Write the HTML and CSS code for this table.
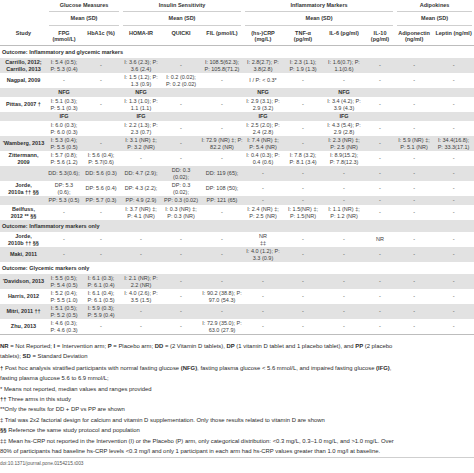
FILE: index.html
```html
<!DOCTYPE html>
<html>
<head>
<meta charset="utf-8">
<link rel="stylesheet" href="styles.css">
</head>
<body>
<div class="page">
<table class="tbl">
<colgroup>
<col class="w-study"><col class="w-fpg"><col class="w-hba"><col class="w-homa"><col class="w-quicki"><col class="w-fil"><col class="w-crp"><col class="w-tnf"><col class="w-il6"><col class="w-il10"><col class="w-adipo"><col class="w-leptin">
</colgroup>
<thead>
<tr class="r1"><th></th><th colspan="2"><div class="grp">Glucose Measures</div></th><th colspan="3"><div class="grp">Insulin Sensitivity</div></th><th colspan="4"><div class="grp">Inflammatory Markers</div></th><th colspan="2"><div class="grp">Adipokines</div></th></tr>
<tr class="r2"><th></th><th colspan="2"><div class="grp grp2">Mean (SD)</div></th><th colspan="3"><div class="grp grp2">Mean (SD)</div></th><th colspan="4"><div class="grp grp2">Mean (SD)</div></th><th colspan="2"><div class="grp grp2">Mean (SD)</div></th></tr>
<tr class="r3">
<th><div class="ch">Study</div></th>
<th><div class="ch">FPG<br>(mmol/L)</div></th>
<th><div class="ch">HbA1c (%)</div></th>
<th><div class="ch">HOMA-IR</div></th>
<th><div class="ch">QUICKI</div></th>
<th><div class="ch">FIL (pmol/L)</div></th>
<th><div class="ch">(hs-)CRP<br>(mg/L)</div></th>
<th><div class="ch">TNF-α<br>(pg/ml)</div></th>
<th><div class="ch">IL-6 (pg/ml)</div></th>
<th><div class="ch">IL-10<br>(pg/ml)</div></th>
<th><div class="ch">Adiponectin<br>(ng/ml)</div></th>
<th><div class="ch">Leptin (ng/ml)</div></th>
</tr>
</thead>
<tbody>
<tr class="sec"><td colspan="12">Outcome: Inflammatory and glycemic markers</td></tr>
<tr class="g"><td class="st">Carrillo, 2012;<br>Carrillo, 2013</td><td>I: 5.4 (0.5);<br>P: 5.3 (0.4)</td><td>-</td><td>I: 3.6 (2.3); P:<br>3.6 (2.4)</td><td>-</td><td>I: 108.5(62.3);<br>P: 105.8(71.2)</td><td>I: 2.8(2.7); P:<br>3.8(2.8)</td><td>I: 2.3 (1.1);<br>P: 1.9 (1.3)</td><td>I: 1.6(0.7); P:<br>1.1(0.6)</td><td>-</td><td>-</td><td>-</td></tr>
<tr><td class="st">Nagpal, 2009</td><td>-</td><td>-</td><td>I: 1.5 (1.2); P:<br>1.3 (0.9)</td><td>I: 0.2 (0.02);<br>P: 0.2 (0.02)</td><td>-</td><td>I / P: &lt; 0.3*</td><td>-</td><td>-</td><td>-</td><td>-</td><td>-</td></tr>
<tr class="g s"><td></td><td class="lb">NFG</td><td></td><td class="lb">NFG</td><td></td><td></td><td class="lb">NFG</td><td></td><td class="lb">NFG</td><td></td><td></td><td></td></tr>
<tr><td class="st">Pittas, 2007 †</td><td>I: 5.1 (0.3);<br>P: 5.1 (0.3)</td><td>-</td><td>I: 1.3 (1.0); P:<br>1.1 (1.1)</td><td>-</td><td>-</td><td>I: 2.9 (3.1); P:<br>2.9 (3.2)</td><td>-</td><td>I: 3.4 (4.2); P:<br>3.9 (4.3)</td><td>-</td><td>-</td><td>-</td></tr>
<tr class="g s"><td></td><td class="lb">IFG</td><td></td><td class="lb">IFG</td><td></td><td></td><td class="lb">IFG</td><td></td><td class="lb">IFG</td><td></td><td></td><td></td></tr>
<tr><td class="st"></td><td>I: 6.0 (0.3);<br>P: 6.0 (0.3)</td><td></td><td>I: 2.2 (1.3); P:<br>2.3 (0.7)</td><td>-</td><td>-</td><td>I: 2.5 (2.0); P:<br>2.4 (2.8)</td><td>-</td><td>I: 4.3 (5.4); P:<br>2.9 (2.8)</td><td>-</td><td>-</td><td>-</td></tr>
<tr class="g"><td class="st">ʹWamberg, 2013</td><td>I: 5.3 (0.4);<br>P: 5.5 (0.5)</td><td>-</td><td>I: 3.1 (NR) ‡;<br>P: 3.2 (NR)</td><td>-</td><td>I: 72.9 (NR) ‡; P:<br>82.2 (NR)</td><td>I: 7.4 (NR) ‡;<br>P: 5.4 (NR)</td><td>-</td><td>I: 2.3 (NR) ‡;<br>P: 2.5 (NR)</td><td>-</td><td>I: 5.9 (NR) ‡;<br>P: 5.1 (NR)</td><td>I: 34.4(16.8);<br>P: 33.3(17.1)</td></tr>
<tr><td class="st">Zittermann,<br>2009</td><td>I: 5.7 (0.8);<br>P: 5.6 (1.2)</td><td>I: 5.6 (0.4);<br>P: 5.7(0.6)</td><td>-</td><td>-</td><td>-</td><td>I: 0.4 (0.3); P:<br>0.4 (0.6)</td><td>I: 7.8 (3.2);<br>P: 8.1 (3.4)</td><td>I: 8.9(15.2);<br>P: 7.8(12.3)</td><td>-</td><td>-</td><td>-</td></tr>
<tr class="g"><td class="st"></td><td>DD: 5.3(0.6);</td><td>DD: 5.6 (0.3)</td><td>DD: 4.7 (2.9);</td><td>DD: 0.3<br>(0.02);</td><td>DD: 119 (65);</td><td>-</td><td>-</td><td>-</td><td>-</td><td>-</td><td>-</td></tr>
<tr><td class="st">Jorde,<br>2010a †† §§</td><td>DP: 5.3<br>(0.6);</td><td>DP: 5.6 (0.4)</td><td>DP: 4.3 (2.2);</td><td>DP: 0.3<br>(0.02);</td><td>DP: 108 (50);</td><td>-</td><td>-</td><td>-</td><td>-</td><td>-</td><td>-</td></tr>
<tr class="g s"><td class="st"></td><td>PP: 5.3 (0.5)</td><td>PP: 5.7 (0.3)</td><td>PP: 4.9 (2.9)</td><td>PP: 0.3 (0.02)</td><td>PP: 121 (65)</td><td>-</td><td>-</td><td>-</td><td>-</td><td>-</td><td>-</td></tr>
<tr><td class="st">Beilfuss,<br>2012 ** §§</td><td>-</td><td>-</td><td>I: 3.7 (NR) ‡;<br>P: 4.1 (NR)</td><td>I: 0.3 (NR) ‡;<br>P: 0.3 (NR)</td><td>-</td><td>I: 2.4 (NR) ‡;<br>P: 2.5 (NR)</td><td>I: 1.5(NR) ‡;<br>P: 1.5(NR)</td><td>I: 1.1 (NR) ‡;<br>P: 1.2 (NR)</td><td>-</td><td>-</td><td>-</td></tr>
<tr class="sec g"><td colspan="12">Outcome: Inflammatory markers only</td></tr>
<tr><td class="st">Jorde,<br>2010b †† §§</td><td>-</td><td>-</td><td>-</td><td>-</td><td>-</td><td>NR<br>‡‡</td><td>-</td><td>-</td><td>NR</td><td>-</td><td>-</td></tr>
<tr class="g"><td class="st">Maki, 2011</td><td>-</td><td>-</td><td>-</td><td>-</td><td>-</td><td>I: 4.0 (1.2); P:<br>3.3 (0.9)</td><td>-</td><td>-</td><td>-</td><td>-</td><td>-</td></tr>
<tr class="sec"><td colspan="12">Outcome: Glycemic markers only</td></tr>
<tr class="g"><td class="st">ʹDavidson, 2013</td><td>I: 5.5 (0.5);<br>P: 5.4 (0.5)</td><td>I: 6.1 (0.3);<br>P: 6.1 (0.4)</td><td>I: 2.1 (NR); P:<br>2.2 (NR)</td><td>-</td><td>-</td><td>-</td><td>-</td><td>-</td><td>-</td><td>-</td><td>-</td></tr>
<tr><td class="st">Harris, 2012</td><td>I: 5.2 (0.4);<br>P: 5.5 (1.0)</td><td>I: 6.1 (0.4);<br>P: 6.1 (0.5)</td><td>I: 4.0 (2.6); P:<br>3.5 (1.5)</td><td>-</td><td>I: 90.2 (38.8); P:<br>97.0 (54.3)</td><td>-</td><td>-</td><td>-</td><td>-</td><td>-</td><td>-</td></tr>
<tr class="g"><td class="st">Mitri, 2011 ††</td><td>I: 5.1 (0.5);<br>P: 5.2 (0.5)</td><td>I: 5.9 (0.3);<br>P: 5.9 (0.4)</td><td>-</td><td>-</td><td>-</td><td>-</td><td>-</td><td>-</td><td>-</td><td>-</td><td>-</td></tr>
<tr class="last"><td class="st">Zhu, 2013</td><td>I: 4.6 (0.3);<br>P: 4.6 (0.3)</td><td>-</td><td>-</td><td>-</td><td>I: 72.9 (35.0); P:<br>63.0 (27.9)</td><td>-</td><td>-</td><td>-</td><td>-</td><td>-</td><td>-</td></tr>
</tbody>
</table>

<div class="notes">
<p class="lead"><b>NR</b> = Not Reported; <b>I</b> = Intervention arm; <b>P</b> = Placebo arm; <b>DD</b> = (2 Vitamin D tablets), <b>DP</b> (1 vitamin D tablet and 1 placebo tablet), and <b>PP</b> (2 placebo<br>tablets); <b>SD</b> = Standard Deviation</p>
<p><b>†</b> Post hoc analysis stratified participants with normal fasting glucose <b>(NFG)</b>, fasting plasma glucose &lt; 5.6 mmol/L, and impaired fasting glucose <b>(IFG)</b>,<br>fasting plasma glucose 5.6 to 6.9 mmol/L;</p>
<p>* Means not reported, median values and ranges provided</p>
<p><b>††</b> Three arms in this study</p>
<p>**Only the results for DD + DP vs PP are shown</p>
<p>‡ Trial was 2x2 factorial design for calcium and vitamin D supplementation. Only those results related to vitamin D are shown</p>
<p><b>§§</b> Reference the same study protocol and population</p>
<p>‡‡ Mean hs-CRP not reported in the Intervention (I) or the Placebo (P) arm, only categorical distribution: &lt;0.3 mg/L, 0.3–1.0 mg/L, and &gt;1.0 mg/L. Over<br>80% of participants had baseline hs-CRP levels &lt;0.3 mg/l and only 1 participant in each arm had hs-CRP values greater than 1.0 mg/l at baseline.</p>
</div>
<div class="doi">doi:10.1371/journal.pone.0154215.t003</div>
</div>
</body>
</html>
```
FILE: styles.css
```css
html, body {
  margin: 0;
  padding: 0;
  background: #fff;
}
.page {
  width: 474px;
  height: 473px;
  overflow: hidden;
  font-family: "Liberation Sans", Arial, Helvetica, sans-serif;
  color: #333;
}
.tbl {
  border-collapse: collapse;
  table-layout: fixed;
  width: 474px;
  font-size: 5.5px;
  line-height: 6.5px;
}
.w-study { width: 47px; }
.w-fpg { width: 34px; }
.w-hba { width: 40px; }
.w-homa { width: 40px; }
.w-quicki { width: 40px; }
.w-fil { width: 42px; }
.w-crp { width: 40px; }
.w-tnf { width: 40px; }
.w-il6 { width: 42px; }
.w-il10 { width: 30px; }
.w-adipo { width: 38px; }
.w-leptin { width: 41px; }

.tbl th {
  padding: 0;
  font-weight: bold;
  color: #333;
  text-align: center;
  white-space: nowrap;
}
.grp {
  height: 11px;
  display: flex;
  align-items: center;
  justify-content: center;
  border-bottom: 1px solid #cfcfcf;
  margin: 0 2px;
}
.grp2 { height: 13px; }
.r3 th {
  border-bottom: 1px solid #bdbdbd;
  vertical-align: top;
}
.ch {
  height: 19px;
  padding-top: 3.5px;
  box-sizing: border-box;
}
.tbl td {
  padding: 1px 0;
  text-align: center;
  vertical-align: middle;
  white-space: nowrap;
  color: #3d3d3d;
}
.tbl tr.g td { background: #e2e2e2; }
.tbl tr.s td { padding: 1.25px 0; }
.tbl td.st,
.tbl td.lb {
  font-weight: bold;
  color: #2e2e2e;
}
.tbl tr.sec td {
  text-align: left;
  font-weight: bold;
  color: #2e2e2e;
  padding: 3px 2px 2.5px;
}
.tbl tr.last td { border-bottom: 1px solid #bdbdbd; }

.notes {
  margin-top: 6px;
  font-size: 5.9px;
  line-height: 10.4px;
  white-space: nowrap;
  color: #2a2a2a;
}
.notes p { margin: 0; }
.notes .lead { margin-bottom: 1px; }
.doi {
  margin-top: 1px;
  border-top: 1px solid #cfcfcf;
  padding-top: 2px;
  font-size: 4.8px;
  line-height: 8px;
  color: #555;
}
```
